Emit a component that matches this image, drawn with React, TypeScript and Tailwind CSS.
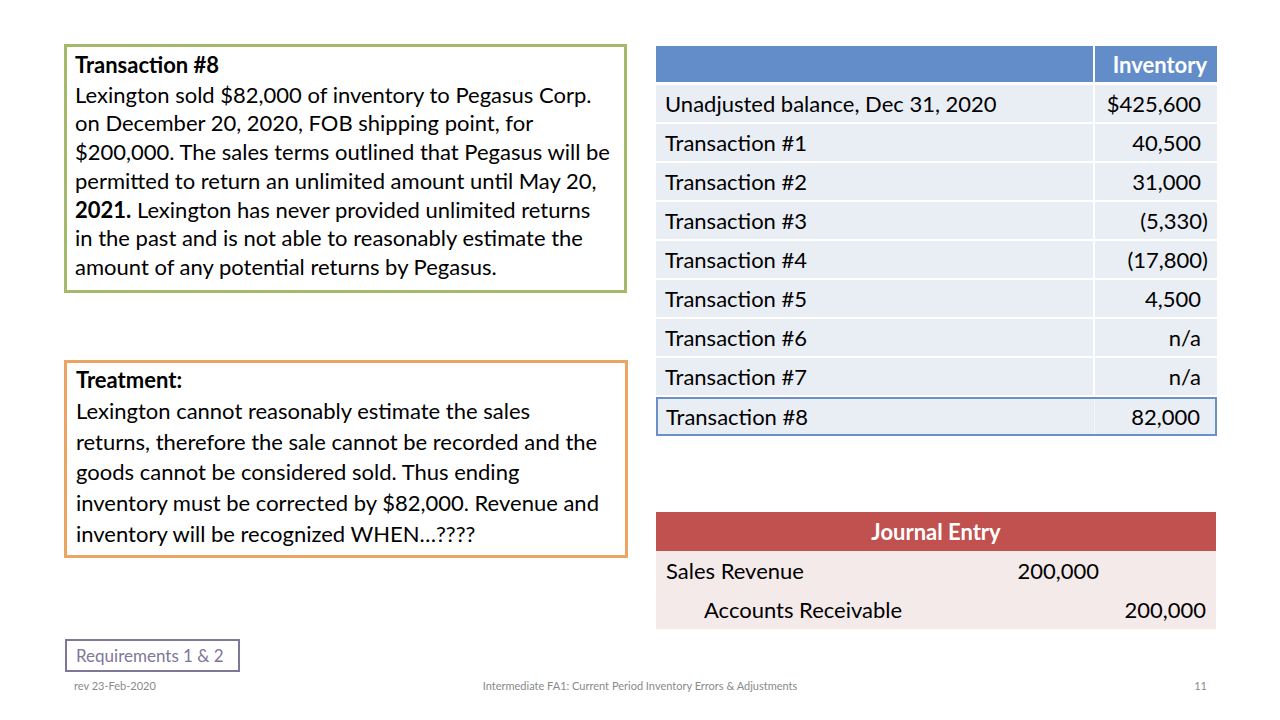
import React from 'react';

const font = { fontFamily: 'Lato, "Open Sans", sans-serif' };

const rows: [string, string][] = [
  ['Unadjusted balance, Dec 31, 2020', '$425,600'],
  ['Transaction #1', '40,500'],
  ['Transaction #2', '31,000'],
  ['Transaction #3', '(5,330)'],
  ['Transaction #4', '(17,800)'],
  ['Transaction #5', '4,500'],
  ['Transaction #6', 'n/a'],
  ['Transaction #7', 'n/a'],
];

const TransactionBox = () => (
  <div className="w-[563px] h-[249px] border-[3px] border-[#a5b96b] px-[8px] pt-[4px] text-[22px] leading-[28.7px] text-black whitespace-nowrap">
    <div className="font-bold mb-[1px]">Transaction #8</div>
    <div>Lexington sold $82,000 of inventory to Pegasus Corp.</div>
    <div>on December 20, 2020, FOB shipping point, for</div>
    <div>$200,000. The sales terms outlined that Pegasus will be</div>
    <div>permitted to return an unlimited amount until May 20,</div>
    <div>
      <span className="font-bold">2021.</span> Lexington has never provided unlimited returns
    </div>
    <div>in the past and is not able to reasonably estimate the</div>
    <div>amount of any potential returns by Pegasus.</div>
  </div>
);

const TreatmentBox = () => (
  <div className="w-[564px] h-[198px] border-[3px] border-[#eba462] px-[9px] pt-[2px] text-[22px] leading-[30.8px] text-black whitespace-nowrap">
    <div className="font-bold">Treatment:</div>
    <div>Lexington cannot reasonably estimate the sales</div>
    <div>returns, therefore the sale cannot be recorded and the</div>
    <div>goods cannot be considered sold. Thus ending</div>
    <div>inventory must be corrected by $82,000. Revenue and</div>
    <div>inventory will be recognized WHEN…????</div>
  </div>
);

const InventoryTable = () => (
  <div className="w-[561px] text-[22px] text-black">
    <div className="grid grid-cols-[437px_1fr] gap-x-[2px] h-[36px] bg-white">
      <div className="bg-[#628dc8]" />
      <div className="bg-[#628dc8] flex items-center justify-end pr-[10px] text-white font-bold">Inventory</div>
    </div>
    <div className="flex flex-col gap-[2px] pt-[3px]">
      {rows.map(([label, value]) => (
        <div key={label} className="grid grid-cols-[437px_1fr] gap-x-[2px] h-[37px]">
          <div className="bg-[#e9edf4] flex items-center pl-[9px] pb-[1px]">{label}</div>
          <div
            className={
              value.startsWith('(')
                ? 'bg-[#e9edf4] flex items-center justify-end pr-[9px] pb-[1px]'
                : 'bg-[#e9edf4] flex items-center justify-end pr-[16px] pb-[1px]'
            }
          >
            {value}
          </div>
        </div>
      ))}
      <div className="grid grid-cols-[437px_1fr] h-[39px] border-2 border-[#6c8fc6] bg-[#e9edf4]">
        <div className="flex items-center pl-[8px] border-r border-[#f4f6fa]">Transaction #8</div>
        <div className="flex items-center justify-end pr-[15px]">82,000</div>
      </div>
    </div>
  </div>
);

const JournalEntry = () => (
  <div className="w-[560px] text-[22px] text-black">
    <div className="h-[39px] bg-[#c0514e] flex items-center justify-center text-white font-bold">Journal Entry</div>
    <div className="bg-[#f5eaea]">
      <div className="grid grid-cols-[443px_1fr] h-[39px] items-center">
        <div className="flex justify-between pl-[10px]">
          <span>Sales Revenue</span>
          <span>200,000</span>
        </div>
        <div />
      </div>
      <div className="grid grid-cols-[443px_1fr] h-[39px] items-center">
        <div className="pl-[48px]">Accounts Receivable</div>
        <div className="text-right pr-[10px]">200,000</div>
      </div>
    </div>
  </div>
);

export default function App() {
  return (
    <div className="w-[1280px] h-[720px] bg-white relative overflow-hidden" style={font}>
      <div className="flex gap-[28px] pl-[64px] pt-[44px]">
        <div className="flex flex-col">
          <TransactionBox />
          <div className="h-[67px]" />
          <TreatmentBox />
          <div className="h-[81px]" />
          <div className="ml-[1px] w-[175px] h-[33px] border-2 border-[#807699] flex items-center pl-[9px] text-[17px] text-[#807699]">
            Requirements 1 &amp; 2
          </div>
        </div>
        <div className="flex flex-col pt-[2px]">
          <InventoryTable />
          <div className="h-[76px]" />
          <JournalEntry />
        </div>
      </div>
      <div className="absolute left-0 right-0 top-[679px] h-[14px] text-[11px] text-[#8a8a8a] flex items-center">
        <span className="ml-[74px]">rev 23-Feb-2020</span>
        <span className="absolute left-0 right-0 text-center">Intermediate FA1: Current Period Inventory Errors &amp; Adjustments</span>
        <span className="absolute right-[73px]">11</span>
      </div>
    </div>
  );
}
